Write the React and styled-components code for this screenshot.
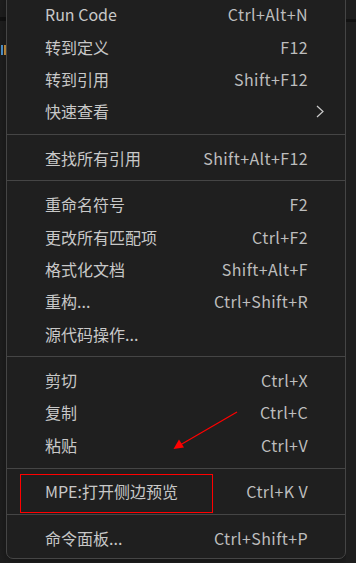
import React from "react";
import styled, { createGlobalStyle } from "styled-components";

const GlobalStyle = createGlobalStyle`
  html, body {
    margin: 0;
    padding: 0;
    background: #1f1f1f;
    overflow: hidden;
  }
  * {
    box-sizing: border-box;
  }
`;

const Page = styled.div`
  position: relative;
  display: flex;
  align-items: flex-start;
  width: 356px;
  height: 563px;
  overflow: hidden;
  background: #1f1f1f;
  font-family: "Noto Sans CJK SC", "Noto Sans", sans-serif;
`;

const Gutter = styled.div`
  flex: none;
  width: ${(p) => p.width}px;
  height: 100%;
  display: flex;
  flex-direction: column;
  background: #1e1e1e;
`;

const GutterBar = styled.div`
  height: ${(p) => p.h}px;
  margin-top: ${(p) => p.top}px;
  background: ${(p) => p.color};
`;

const GutterGlyph = styled.div`
  margin-top: 24px;
  margin-left: 1px;
  width: 5px;
  height: 10px;
  display: flex;
  gap: 1px;
  span {
    flex: 1;
    background: ${(p) => p.a};
  }
  span + span {
    background: ${(p) => p.b};
  }
`;

const Menu = styled.div`
  flex: none;
  width: 340px;
  margin-top: -8px;
  padding: 5px 0 4px;
  background: #1f1f1f;
  border: 1px solid #454545;
  border-radius: 7px;
  color: #c8c8c8;
  box-shadow: 0 2px 8px rgba(0, 0, 0, 0.36);
`;

const Row = styled.div`
  display: flex;
  align-items: center;
  height: 32.4px;
  padding: 0 21px 0 38px;
  font-size: 16px;
  line-height: 1;
  white-space: nowrap;
`;

const Label = styled.span`
  flex: 1;
`;

const Key = styled.span`
  color: #bdbdbd;
  letter-spacing: 0.4px;
`;

const Sub = styled.span`
  width: 16px;
  display: flex;
  justify-content: flex-end;
  align-items: center;
`;

const Separator = styled.div`
  height: 1px;
  margin: 6.5px 0;
  background: #454545;
`;

const Highlight = styled.div`
  position: absolute;
  left: 20px;
  top: 474px;
  width: 193px;
  height: 39px;
  border: 1.3px solid #ff0000;
  pointer-events: none;
`;

const Arrow = styled.svg`
  position: absolute;
  left: 0;
  top: 0;
  pointer-events: none;
`;

const Chevron = () => (
  <svg width="8" height="13" viewBox="0 0 8 13">
    <path d="M1 1 L7 6.5 L1 12" fill="none" stroke="#cccccc" strokeWidth="1.2" />
  </svg>
);

const groups = [
  [
    ["Run Code", "Ctrl+Alt+N"],
    ["转到定义", "F12"],
    ["转到引用", "Shift+F12"],
    ["快速查看", "", true],
  ],
  [["查找所有引用", "Shift+Alt+F12"]],
  [
    ["重命名符号", "F2"],
    ["更改所有匹配项", "Ctrl+F2"],
    ["格式化文档", "Shift+Alt+F"],
    ["重构...", "Ctrl+Shift+R"],
    ["源代码操作...", ""],
  ],
  [
    ["剪切", "Ctrl+X"],
    ["复制", "Ctrl+C"],
    ["粘贴", "Ctrl+V"],
  ],
  [["MPE:打开侧边预览", "Ctrl+K V"]],
  [["命令面板...", "Ctrl+Shift+P"]],
];

export default function App() {
  return (
    <>
      <GlobalStyle />
      <Page>
        <Gutter width={6}>
          <GutterBar top={17} h={4} color="#111111" />
          <GutterGlyph a="#4e94ce" b="#d19a45">
            <span />
            <span />
          </GutterGlyph>
        </Gutter>
        <Menu>
          {groups.map((group, gi) => (
            <React.Fragment key={gi}>
              {gi > 0 && <Separator />}
              {group.map(([label, key, submenu]) => (
                <Row key={label}>
                  <Label>{label}</Label>
                  <Key>{key}</Key>
                  <Sub>{submenu && <Chevron />}</Sub>
                </Row>
              ))}
            </React.Fragment>
          ))}
        </Menu>
        <Gutter width={10}>
          <GutterBar top={19} h={3} color="#121212" />
        </Gutter>
        <Highlight />
        <Arrow width="356" height="563" viewBox="0 0 356 563">
          <line x1="237" y1="412" x2="181" y2="444.5" stroke="#ff0000" strokeWidth="1.2" />
          <polygon points="173.5,449 179,439.5 184,447.5" fill="#ff0000" />
        </Arrow>
      </Page>
    </>
  );
}
